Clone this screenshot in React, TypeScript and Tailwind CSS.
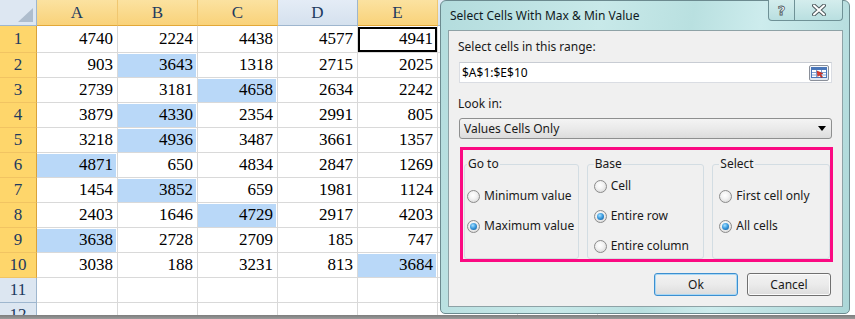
import React from "react";

const data: number[][] = [
  [4740, 2224, 4438, 4577, 4941],
  [903, 3643, 1318, 2715, 2025],
  [2739, 3181, 4658, 2634, 2242],
  [3879, 4330, 2354, 2991, 805],
  [3218, 4936, 3487, 3661, 1357],
  [4871, 650, 4834, 2847, 1269],
  [1454, 3852, 659, 1981, 1124],
  [2403, 1646, 4729, 2917, 4203],
  [3638, 2728, 2709, 185, 747],
  [3038, 188, 3231, 813, 3684],
];

const headerCols = [
  { l: "A", on: true },
  { l: "B", on: true },
  { l: "C", on: true },
  { l: "D", on: false },
  { l: "E", on: true },
  { l: "", on: false },
  { l: "", on: false },
];

function Radio({ checked }: { checked?: boolean }) {
  return (
    <span className="flex h-[13px] w-[13px] shrink-0 items-center justify-center rounded-full border border-[#8b8b8b] bg-[radial-gradient(circle_at_45%_40%,#ffffff_0%,#f3f3f3_40%,#cfcfcf_100%)]">
      {checked && (
        <span className="h-[7px] w-[7px] rounded-full bg-[radial-gradient(circle_at_40%_35%,#a8e0ff_0%,#3d9de0_45%,#0b4d8c_100%)]" />
      )}
    </span>
  );
}

function RadioRow({ label, checked }: { label: string; checked?: boolean }) {
  return (
    <div className="flex h-[20px] items-center gap-[4px]">
      <Radio checked={checked} />
      <span className="leading-[16px]">{label}</span>
    </div>
  );
}

function Sheet() {
  return (
    <div className="grid h-[315px] grid-cols-[37px_81px_80px_80px_80px_80px_80px_80px] grid-rows-[26px_27px_repeat(11,25px)] overflow-hidden font-['Liberation_Serif',serif] text-[17px] text-black">
      <div className="flex items-end justify-end border-r border-b border-[#9eb6ce] bg-[#dde7f2] pr-[3px] pb-[3px]">
        <svg width="15" height="14" viewBox="0 0 15 14">
          <polygon points="15,0 15,14 0,14" fill="#aebdcd" />
        </svg>
      </div>
      {headerCols.map((c, i) => (
        <div
          key={i}
          className={
            c.on
              ? "flex items-center justify-center border-r border-b border-r-[#f0c770] border-b-[#e3a838] bg-[linear-gradient(#fbe2a0,#f9d27a)] text-[#1d3a5f]"
              : "flex items-center justify-center border-r border-b border-[#9eb6ce] bg-[linear-gradient(#e4ecf6,#d5e1ee)] text-[#1d3a5f]"
          }
        >
          {c.l}
        </div>
      ))}
      {Array.from({ length: 12 }).map((_, r) => {
        const row = data[r];
        const max = row ? Math.max(...row) : -1;
        return (
          <React.Fragment key={r}>
            <div
              className={
                r < 10
                  ? "flex items-center justify-center border-r border-b border-r-[#d9a23a] border-b-[#f1c462] bg-[#fed66b] text-[#1d3a5f]"
                  : "flex items-center justify-center border-r border-b border-[#9eb6ce] bg-[#dce6f1] text-[#1d3a5f]"
              }
            >
              {r + 1}
            </div>
            {Array.from({ length: 7 }).map((__, c) => {
              const v = row && c < 5 ? row[c] : undefined;
              const active = r === 0 && c === 4;
              const hi = v !== undefined && v === max && !active;
              return (
                <div
                  key={c}
                  className={
                    hi
                      ? "relative flex items-center justify-end border-r border-b border-[#d9d9d9] bg-[#b9d8f8] pr-[4px] shadow-[inset_0_1px_0_#ffffff,inset_-1px_0_0_#ffffff]"
                      : "relative flex items-center justify-end border-r border-b border-[#d9d9d9] bg-white pr-[4px]"
                  }
                >
                  {active && <div className="absolute inset-0 top-px border-2 border-black" />}
                  {v !== undefined ? <span className="relative">{v}</span> : null}
                </div>
              );
            })}
          </React.Fragment>
        );
      })}
    </div>
  );
}

function RangeIcon() {
  return (
    <div className="flex h-[16px] w-[20px] items-center justify-center rounded-[2px] border border-[#8a8f99] bg-[linear-gradient(#f7f9fc,#dfe6ef)]">
      <svg width="16" height="11" viewBox="0 0 16 11">
        <rect x="0.5" y="0.5" width="15" height="10" fill="#ffffff" stroke="#4a76b8" />
        <rect x="1" y="1" width="14" height="2" fill="#4a76b8" />
        <line x1="1" y1="5.5" x2="15" y2="5.5" stroke="#7f9fd0" />
        <line x1="1" y1="8" x2="15" y2="8" stroke="#7f9fd0" />
        <line x1="5.5" y1="3" x2="5.5" y2="10" stroke="#7f9fd0" />
        <line x1="10.5" y1="3" x2="10.5" y2="10" stroke="#7f9fd0" />
        <polygon points="6,4 12,6.5 9.5,7.2 11.5,10 10.3,10.6 8.4,7.9 6.8,9.6" fill="#e2392a" stroke="#9c1a10" strokeWidth="0.5" />
      </svg>
    </div>
  );
}

function Dialog() {
  return (
    <div className="absolute left-[440px] top-0 flex h-[314px] w-[410px] flex-col rounded-t-[6px] rounded-b-[5px] border border-[#6c8a8f] bg-[linear-gradient(100deg,#b3dcdd_0%,#c8e9e9_35%,#b9e0e0_55%,#cdeced_70%,#abd6d7_100%)] font-['Noto_Sans',sans-serif] text-[12px] text-[#1a1a1a]">
      <div className="flex h-[29px] shrink-0 items-center">
        <span className="pl-[9px] leading-[16px] text-[#0f1a22]">Select Cells With Max &amp; Min Value</span>
        <div className="mr-[6px] ml-auto -mt-px flex h-[21px] self-start">
          <div className="flex w-[27px] items-center justify-center rounded-bl-[4px] border border-t-0 border-[#6f9196] bg-[linear-gradient(#d4eded,#b9dfe0)]">
            <span className="font-['DejaVu_Sans',sans-serif] text-[13px] leading-none font-bold text-white [-webkit-text-stroke:0.8px_#4d5a5e]">?</span>
          </div>
          <div className="flex w-[48px] items-center justify-center rounded-br-[4px] border border-t-0 border-l-0 border-[#6f9196] bg-[linear-gradient(#d4eded,#b9dfe0)]">
            <svg width="14" height="12" viewBox="0 0 14 12">
              <path d="M2 1.5 L12 10.5 M12 1.5 L2 10.5" stroke="#4d5a5e" strokeWidth="4" strokeLinecap="round" />
              <path d="M2 1.5 L12 10.5 M12 1.5 L2 10.5" stroke="#ffffff" strokeWidth="2" strokeLinecap="round" />
            </svg>
          </div>
        </div>
      </div>
      <div className="mr-[6px] ml-[7px] flex h-[277px] flex-col border border-[#8ea2a6] bg-[#f0f0f0]">
        <div className="mt-[8px] ml-[9px] leading-[16px]">Select cells in this range:</div>
        <div className="mt-[7px] ml-[10px] flex h-[21px] w-[373px] items-center justify-between border border-[#dadde3] border-t-[#c8ccd3] bg-white pr-[2px] pl-[2px]">
          <span className="leading-[16px] text-black">$A$1:$E$10</span>
          <RangeIcon />
        </div>
        <div className="mt-[13px] ml-[9px] leading-[16px]">Look in:</div>
        <div className="mt-[6px] ml-[10px] flex h-[21px] w-[373px] items-center justify-between rounded-[3px] border border-[#8e8f8f] bg-[linear-gradient(#f4f4f4,#eaeaea_50%,#dcdcdc)] pr-[5px] pl-[4px]">
          <span className="leading-[16px]">Values Cells Only</span>
          <svg width="8" height="5" viewBox="0 0 8 5">
            <polygon points="0,0 8,0 4,5" fill="#000" />
          </svg>
        </div>
        <div className="mt-[8px] ml-[11px] flex h-[115px] w-[373px] gap-[7px] border-[3px] border-[#fb0a82] pt-[7px] pl-[1px]">
          <fieldset className="m-0 h-[102px] w-[115px] rounded-[3px] border border-[#d3dde3] p-0 pl-[2px]">
            <legend className="px-[1px] leading-[14px]">Go to</legend>
            <div className="flex flex-col gap-[10px] pt-[15px]">
              <RadioRow label="Minimum value" />
              <RadioRow label="Maximum value" checked />
            </div>
          </fieldset>
          <fieldset className="m-0 ml-px h-[102px] w-[118px] rounded-[3px] border border-[#d3dde3] p-0 pl-[6px]">
            <legend className="px-[1px] leading-[14px]">Base</legend>
            <div className="flex flex-col gap-[10px] pt-[5px]">
              <RadioRow label="Cell" />
              <RadioRow label="Entire row" checked />
              <RadioRow label="Entire column" />
            </div>
          </fieldset>
          <fieldset className="m-0 ml-px h-[102px] w-[118px] rounded-[3px] border border-[#d3dde3] p-0 pl-[6px]">
            <legend className="px-[1px] leading-[14px]">Select</legend>
            <div className="flex flex-col gap-[10px] pt-[15px]">
              <RadioRow label="First cell only" />
              <RadioRow label="All cells" checked />
            </div>
          </fieldset>
        </div>
        <div className="mt-[11px] flex justify-end gap-[9px] pr-[11px]">
          <div className="flex h-[23px] w-[84px] items-center justify-center rounded-[3px] border border-[#3c8fd0] bg-[linear-gradient(#f2f2f2,#ebebeb_50%,#dcdcdc)] shadow-[inset_0_0_0_1px_#a9d8f5]">
            Ok
          </div>
          <div className="flex h-[23px] w-[84px] items-center justify-center rounded-[3px] border border-[#707070] bg-[linear-gradient(#f2f2f2,#ebebeb_50%,#dcdcdc)] shadow-[inset_0_0_0_1px_#fbfbfb]">
            Cancel
          </div>
        </div>
      </div>
    </div>
  );
}

export default function App() {
  return (
    <div className="relative flex h-[319px] w-[855px] flex-col overflow-hidden bg-white">
      <Sheet />
      <div className="h-[4px] bg-[linear-gradient(#7d7d7d,#9a9a9a)]" />
      <Dialog />
    </div>
  );
}
